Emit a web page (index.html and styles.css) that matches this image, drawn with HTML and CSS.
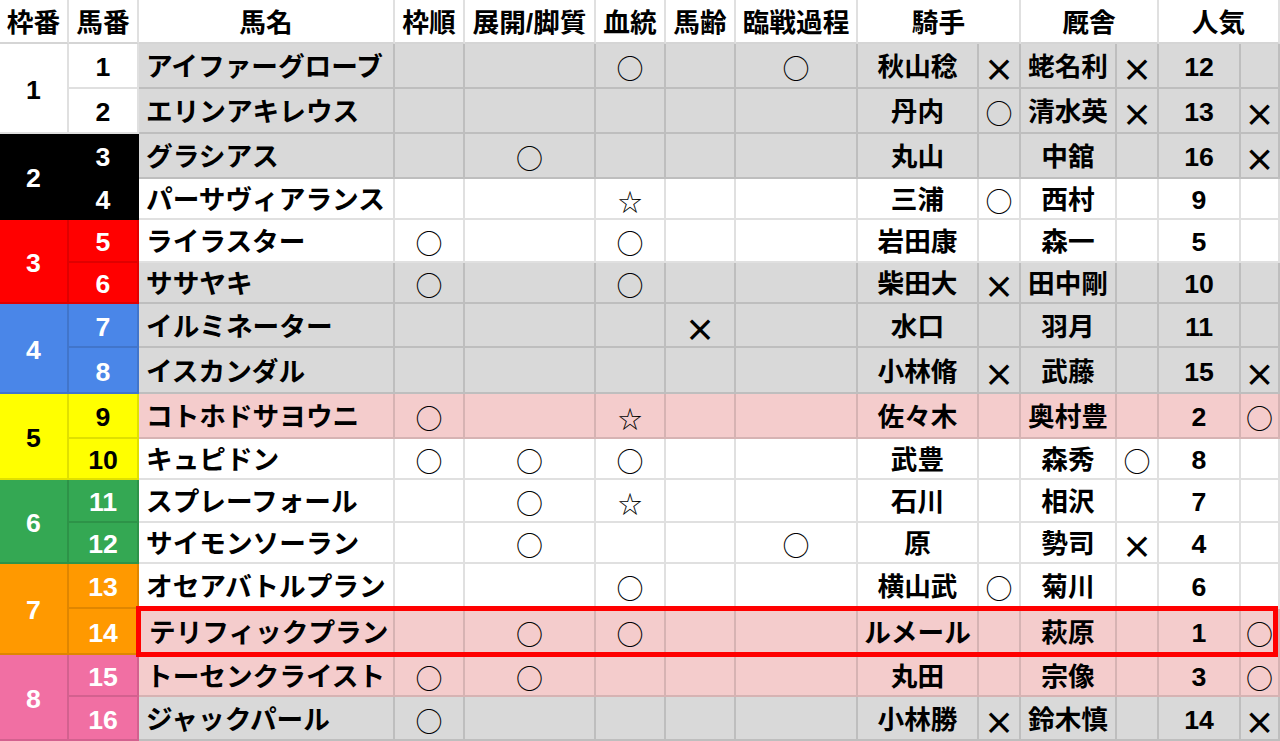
FILE: index.html
```html
<!DOCTYPE html>
<html lang="ja">
<head>
<meta charset="utf-8">
<title>出馬表</title>
<link rel="stylesheet" href="styles.css">
</head>
<body>
<div class="sheet">
  <div class="row hd">
    <div>枠番</div><div>馬番</div><div>馬名</div><div>枠順</div><div>展開/脚質</div><div>血統</div><div>馬齢</div><div>臨戦過程</div><div class="s2">騎手</div><div class="s2">厩舎</div><div class="s2">人気</div>
  </div>
  <div class="row g">
    <div class="fr f1">1</div><div class="f1">1</div><div class="nm">アイファーグローブ</div><div></div><div></div><div class="m">○</div><div></div><div class="m">○</div><div>秋山稔</div><div class="m x">×</div><div>蛯名利</div><div class="m x">×</div><div>12</div><div></div>
  </div>
  <div class="row g">
    <div class="f1">2</div><div class="nm">エリンアキレウス</div><div></div><div></div><div></div><div></div><div></div><div>丹内</div><div class="m">○</div><div>清水英</div><div class="m x">×</div><div>13</div><div class="m x">×</div>
  </div>
  <div class="row g">
    <div class="fr f2">2</div><div class="f2">3</div><div class="nm">グラシアス</div><div></div><div class="m">○</div><div></div><div></div><div></div><div>丸山</div><div></div><div>中舘</div><div></div><div>16</div><div class="m x">×</div>
  </div>
  <div class="row w">
    <div class="f2">4</div><div class="nm">パーサヴィアランス</div><div></div><div></div><div class="m st">☆</div><div></div><div></div><div>三浦</div><div class="m">○</div><div>西村</div><div></div><div>9</div><div></div>
  </div>
  <div class="row w">
    <div class="fr f3">3</div><div class="f3">5</div><div class="nm">ライラスター</div><div class="m">○</div><div></div><div class="m">○</div><div></div><div></div><div>岩田康</div><div></div><div>森一</div><div></div><div>5</div><div></div>
  </div>
  <div class="row g">
    <div class="f3">6</div><div class="nm">ササヤキ</div><div class="m">○</div><div></div><div class="m">○</div><div></div><div></div><div>柴田大</div><div class="m x">×</div><div>田中剛</div><div></div><div>10</div><div></div>
  </div>
  <div class="row g">
    <div class="fr f4">4</div><div class="f4">7</div><div class="nm">イルミネーター</div><div></div><div></div><div></div><div class="m x">×</div><div></div><div>水口</div><div></div><div>羽月</div><div></div><div>11</div><div></div>
  </div>
  <div class="row g">
    <div class="f4">8</div><div class="nm">イスカンダル</div><div></div><div></div><div></div><div></div><div></div><div>小林脩</div><div class="m x">×</div><div>武藤</div><div></div><div>15</div><div class="m x">×</div>
  </div>
  <div class="row p">
    <div class="fr f5">5</div><div class="f5">9</div><div class="nm">コトホドサヨウニ</div><div class="m">○</div><div></div><div class="m st">☆</div><div></div><div></div><div>佐々木</div><div></div><div>奥村豊</div><div></div><div>2</div><div class="m">○</div>
  </div>
  <div class="row w">
    <div class="f5">10</div><div class="nm">キュピドン</div><div class="m">○</div><div class="m">○</div><div class="m">○</div><div></div><div></div><div>武豊</div><div></div><div>森秀</div><div class="m">○</div><div>8</div><div></div>
  </div>
  <div class="row w">
    <div class="fr f6">6</div><div class="f6">11</div><div class="nm">スプレーフォール</div><div></div><div class="m">○</div><div class="m st">☆</div><div></div><div></div><div>石川</div><div></div><div>相沢</div><div></div><div>7</div><div></div>
  </div>
  <div class="row w">
    <div class="f6">12</div><div class="nm">サイモンソーラン</div><div></div><div class="m">○</div><div></div><div></div><div class="m">○</div><div>原</div><div></div><div>勢司</div><div class="m x">×</div><div>4</div><div></div>
  </div>
  <div class="row w">
    <div class="fr f7">7</div><div class="f7">13</div><div class="nm">オセアバトルプラン</div><div></div><div></div><div class="m">○</div><div></div><div></div><div>横山武</div><div class="m">○</div><div>菊川</div><div></div><div>6</div><div></div>
  </div>
  <div class="row p">
    <div class="f7">14</div><div class="nm nm-hl">テリフィックプラン</div><div></div><div class="m">○</div><div class="m">○</div><div></div><div></div><div>ルメール</div><div></div><div>萩原</div><div></div><div>1</div><div class="m">○</div>
  </div>
  <div class="row p">
    <div class="fr f8">8</div><div class="f8">15</div><div class="nm">トーセンクライスト</div><div class="m">○</div><div class="m">○</div><div></div><div></div><div></div><div>丸田</div><div></div><div>宗像</div><div></div><div>3</div><div class="m">○</div>
  </div>
  <div class="row g">
    <div class="f8">16</div><div class="nm">ジャックパール</div><div class="m">○</div><div></div><div></div><div></div><div></div><div>小林勝</div><div class="m x">×</div><div>鈴木慎</div><div></div><div>14</div><div class="m x">×</div>
  </div>
  <div class="hl"></div>
</div>
</body>
</html>
```
FILE: styles.css
```css
html, body {
  margin: 0;
  padding: 0;
  background: #ffffff;
}
body {
  font-family: "Liberation Sans", "Noto Sans CJK JP", sans-serif;
  font-weight: 700;
  font-size: 26.67px;
  color: #000000;
  overflow: hidden;
}
.sheet {
  position: relative;
  display: grid;
  grid-template-columns: 69px 70px 256px 70px 131px 70px 70px 122px 121px 42px 96px 42px 82px 39px;
  grid-template-rows: 44px 45px 45px 45px 41px 43px 41px 44px 46px 45px 41px 43px 41px 45px 46px 42px 44px;
  width: 1280px;
  height: 741px;
  overflow: hidden;
}
.row {
  display: contents;
}
.row > div {
  display: flex;
  align-items: center;
  justify-content: center;
  padding-top: 4px;
  border-right: 2px solid rgba(0, 0, 0, 0.12);
  border-bottom: 2px solid rgba(0, 0, 0, 0.12);
  white-space: nowrap;
  line-height: 1;
  min-width: 0;
}
.hd > div {
  background: #ffffff;
  border-bottom-color: rgba(0, 0, 0, 0.16);
}
.s2 {
  grid-column: span 2;
}
.w > div { background: #ffffff; }
.g > div { background: #d9d9d9; }
.p > div { background: #f4cccc; }
.nm {
  justify-content: flex-start !important;
  padding-left: 7px;
}
.nm-hl {
  padding-left: 10px;
}
.m {
  font-family: "Noto Sans CJK JP", sans-serif;
  font-weight: 400;
  font-size: 27px;
}
.m.x {
  font-weight: 700;
  font-size: 31px;
}
.m.st {
  font-size: 24px;
}
.fr {
  grid-column: 1;
  grid-row: span 2;
}
.row > .f1 { background: #ffffff; color: #000000; }
.row > .f2 { background: #000000; color: #ffffff; }
.row > .f3 { background: #ff0000; color: #ffffff; }
.row > .f4 { background: #4a86e8; color: #ffffff; }
.row > .f5 { background: #ffff00; color: #000000; }
.row > .f6 { background: #34a853; color: #ffffff; }
.row > .f7 { background: #ff9900; color: #ffffff; }
.row > .f8 { background: #f16fa3; color: #ffffff; }
.hl {
  position: absolute;
  grid-column: 3 / 15;
  grid-row: 15 / 16;
  top: -3px;
  right: 2px;
  bottom: -2px;
  left: -3px;
  border: 5px solid #ff0000;
  pointer-events: none;
}
```
